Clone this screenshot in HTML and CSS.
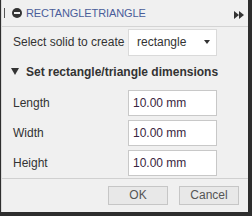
FILE: index.html
```html
<!DOCTYPE html>
<html lang="en">
<head>
    <meta charset="UTF-8">
    <title>RectangleTriangle</title>
    <link rel="stylesheet" href="styles.css">
</head>
<body>
    <div class="dialog">
        <!-- Title bar -->
        <div class="title-bar">
            <span class="grip"></span>
            <span class="collapse-icon"></span>
            <span class="title">RECTANGLETRIANGLE</span>
            <svg class="expand-icon" width="10" height="8" viewBox="0 0 10 8">
                <path d="M0 0 L5 4 L0 8 Z M5 0 L10 4 L5 8 Z" fill="#333"/>
            </svg>
        </div>

        <!-- Body -->
        <div class="content">
            <div class="row row-select">
                <span class="label">Select solid to create</span>
                <div class="select-box">
                    <span>rectangle</span>
                    <span class="caret"></span>
                </div>
            </div>

            <div class="group-header">
                <span class="group-caret"></span>
                <span>Set rectangle/triangle dimensions</span>
            </div>

            <div class="row">
                <span class="label">Length</span>
                <div class="input-box">10.00 mm</div>
            </div>
            <div class="row">
                <span class="label">Width</span>
                <div class="input-box">10.00 mm</div>
            </div>
            <div class="row">
                <span class="label">Height</span>
                <div class="input-box">10.00 mm</div>
            </div>
        </div>

        <!-- Footer buttons -->
        <div class="footer">
            <button class="btn">OK</button>
            <button class="btn">Cancel</button>
        </div>
    </div>
</body>
</html>
```

FILE: styles.css
```css
* {
    margin: 0;
    padding: 0;
    box-sizing: border-box;
}

body {
    width: 252px;
    height: 216px;
    background: #2e2e2e;
    font-family: 'Liberation Sans', Arial, sans-serif;
    overflow: hidden;
}

.dialog {
    width: 247px;
    height: 212px;
    margin-left: 1px;
    background: #f0f0f0;
    border-left: 1px solid #d8d8d8;
    display: flex;
    flex-direction: column;
}

/* Title bar */
.title-bar {
    height: 27px;
    display: flex;
    align-items: center;
    border-bottom: 1px solid #d4d4d4;
    padding-left: 2px;
    padding-right: 4px;
}

.grip {
    width: 1px;
    height: 10px;
    background: #555;
    margin-right: 7px;
}

.collapse-icon {
    width: 10px;
    height: 10px;
    border-radius: 50%;
    background: #333;
    position: relative;
    margin-right: 4px;
}

.collapse-icon::after {
    content: '';
    position: absolute;
    left: 2px;
    top: 4px;
    width: 6px;
    height: 2px;
    background: #f0f0f0;
}

.title {
    flex: 1;
    font-size: 11px;
    color: #4a5d9a;
    letter-spacing: -0.1px;
}

.expand-icon {
    margin-top: 5px;
}

/* Content */
.content {
    flex: 1;
    padding: 0 0 0 11px;
    border-bottom: 1px solid #d0d0d0;
}

.row {
    display: flex;
    align-items: center;
    height: 30px;
}

.row-select {
    height: 31px;
    margin-top: 0px;
}

.label {
    width: 115px;
    font-size: 12px;
    color: #333;
}

.select-box {
    width: 89px;
    height: 27px;
    background: #fff;
    border: 1px solid #dadada;
    display: flex;
    align-items: center;
    justify-content: space-between;
    padding: 0 6px 0 8px;
    font-size: 12px;
    color: #333;
}

.caret {
    width: 0;
    height: 0;
    border-left: 3px solid transparent;
    border-right: 3px solid transparent;
    border-top: 4px solid #333;
}

.group-header {
    display: flex;
    align-items: center;
    height: 28px;
    margin-left: -2px;
    margin-bottom: 2px;
    font-size: 12px;
    font-weight: bold;
    color: #333;
}

.group-caret {
    width: 0;
    height: 0;
    border-left: 4px solid transparent;
    border-right: 4px solid transparent;
    border-top: 7px solid #333;
    margin-right: 7px;
}

.input-box {
    width: 89px;
    height: 26px;
    background: #fff;
    border: 1px solid #c8c8c8;
    display: flex;
    align-items: center;
    padding-left: 4px;
    font-size: 12px;
    color: #3a2540;
}

/* Footer */
.footer {
    height: 34px;
    display: flex;
    align-items: center;
    justify-content: flex-end;
    gap: 11px;
    padding-right: 9px;
}

.btn {
    width: 60px;
    height: 19px;
    background: #e8e8e8;
    border: 1px solid #c6c6c6;
    font-family: 'Liberation Sans', Arial, sans-serif;
    font-size: 12px;
    color: #555;
}
```
